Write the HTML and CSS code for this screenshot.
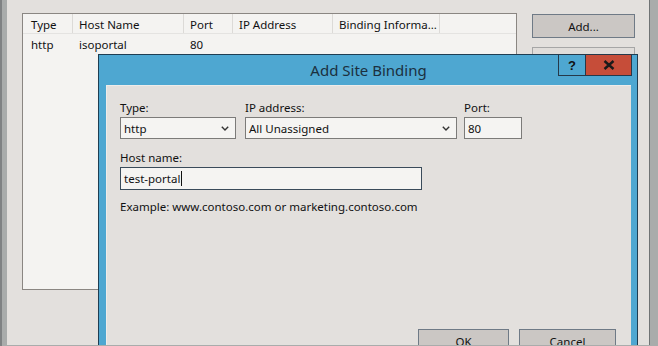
FILE: index.html
```html
<!DOCTYPE html>
<html>
<head>
<meta charset="utf-8">
<link rel="stylesheet" href="styles.css">
</head>
<body>
<div class="screen">
  <div class="window">
    <div class="listbox">
      <div class="row head">
        <div class="c c1">Type</div>
        <div class="c c2">Host Name</div>
        <div class="c c3">Port</div>
        <div class="c c4">IP Address</div>
        <div class="c c5">Binding Informa...</div>
        <div class="c c6"></div>
      </div>
      <div class="row item">
        <div class="c c1">http</div>
        <div class="c c2">isoportal</div>
        <div class="c c3">80</div>
        <div class="c c4"></div>
        <div class="c c5"></div>
      </div>
    </div>
    <div class="side">
      <div class="btn side-btn">Add...</div>
      <div class="btn side-btn light"></div>
    </div>

    <div class="dialog">
      <div class="titlebar">Add Site Binding</div>
      <div class="caption-btns">
        <div class="cap help">?</div>
        <div class="cap close">
          <svg width="12" height="10" viewBox="0 0 12 10"><path d="M1.5 1 L10.5 9 M10.5 1 L1.5 9" stroke="#1a1a1a" stroke-width="2.4" fill="none"/></svg>
        </div>
      </div>
      <div class="client">
        <div class="fields">
          <div class="field">
            <label class="lbl">Type:</label>
            <div class="select w-type"><span>http</span>
              <svg width="8" height="5" viewBox="0 0 8 5"><path d="M0.8 0.8 L4 4 L7.2 0.8" stroke="#333" stroke-width="1.4" fill="none"/></svg>
            </div>
          </div>
          <div class="field">
            <label class="lbl">IP address:</label>
            <div class="select w-ip"><span>All Unassigned</span>
              <svg width="8" height="5" viewBox="0 0 8 5"><path d="M0.8 0.8 L4 4 L7.2 0.8" stroke="#333" stroke-width="1.4" fill="none"/></svg>
            </div>
          </div>
          <div class="field">
            <label class="lbl">Port:</label>
            <div class="input w-port">80</div>
          </div>
        </div>
        <label class="lbl host-lbl">Host name:</label>
        <div class="input focused w-host">test-portal<span class="caret"></span></div>
        <div class="example">Example: www.contoso.com or marketing.contoso.com</div>
        <div class="spacer"></div>
        <div class="actions">
          <div class="btn ok">OK</div>
          <div class="btn cancel">Cancel</div>
        </div>
      </div>
    </div>
  </div>
</div>
</body>
</html>
```
FILE: styles.css
```css
* { box-sizing: border-box; }
html, body { margin: 0; padding: 0; }
body {
  width: 658px;
  height: 346px;
  overflow: hidden;
  font-family: "Noto Sans", "Open Sans", sans-serif;
  font-size: 11.5px;
  color: #111;
  background: #a9acab;
}
.screen {
  width: 658px;
  height: 346px;
  border-left: 2px solid #7f8283;
  padding: 0 8px 1px 5px;
}
.window {
  position: relative;
  overflow: hidden;
  height: 345px;
  background: #e3e0dd;
  border-right: 1px solid #6f7374;
  display: flex;
  align-items: flex-start;
  padding: 13px 0 0 15px;
  gap: 15px;
}
.listbox {
  width: 495px;
  height: 277px;
  background: #f4f3f1;
  border: 1px solid #8a8682;
}
.row { display: flex; height: 20px; }
.row.head { border-bottom: 1px solid #e4e3e1; }
.row.item { height: 20px; }
.c {
  padding-left: 8px;
  line-height: 21px;
  white-space: nowrap;
}
.head .c { border-right: 1px solid #dcdad7; }
.head .c6 { border-right: none; }
.c1 { width: 50px; }
.c2 { width: 111px; padding-left: 6px; }
.c3 { width: 49px; padding-left: 6px; }
.c4 { width: 100px; padding-left: 6px; }
.c5 { width: 107px; padding-left: 6px; }
.c6 { flex: 1; }

.side { display: flex; flex-direction: column; gap: 9px; padding-top: 1px; }
.btn {
  display: flex;
  align-items: center;
  justify-content: center;
  height: 24px;
  background: #cbc7c4;
  border: 1px solid #6f7a86;
}
.side-btn { width: 103px; }
.side-btn.light { background: #e0ddda; border-color: #a6a6a6; }

.dialog {
  position: absolute;
  left: 91px;
  top: 54px;
  width: 540px;
  height: 310px;
  background: #4ea7d1;
  border: 1px solid #1e3d52;
  padding: 0 6px 0 7px;
  display: flex;
  flex-direction: column;
}
.titlebar {
  height: 30px;
  flex: none;
  display: flex;
  align-items: center;
  justify-content: center;
  font-size: 15px;
  color: #1b3040;
  padding-bottom: 1px;
}
.caption-btns {
  position: absolute;
  top: -1px;
  right: 5px;
  display: flex;
}
.cap {
  height: 22px;
  border: 1px solid #25394a;
  display: flex;
  align-items: center;
  justify-content: center;
}
.help {
  width: 28px;
  background: #4ea7d1;
  font-weight: bold;
  font-size: 13px;
  color: #111;
  font-family: "Liberation Sans", sans-serif;
}
.close { width: 46px; background: #c64d39; border-left: none; }

.client {
  flex: 1;
  background: #e3e0dd;
  border-top: 1px solid #eeecea;
  border-left: 1px solid #eeecea;
  padding: 11px 0 0 13px;
  display: flex;
  flex-direction: column;
  align-items: flex-start;
}
.fields { display: flex; gap: 9px; }
.field { display: flex; flex-direction: column; }
.field:last-child { margin-left: -2px; }
.lbl { line-height: 21px; height: 20px; }
.select, .input {
  height: 22px;
  background: #f5f4f2;
  border: 1px solid #7c7b79;
  display: flex;
  align-items: center;
  padding: 0 3px 0 3px;
  white-space: nowrap;
}
.select { justify-content: space-between; padding-right: 6px; }
.w-type { width: 116px; }
.w-ip { width: 212px; }
.w-port { width: 58px; }
.host-lbl { margin-top: 8px; }
.w-host { width: 302px; height: 23px; }
.focused { border-color: #3a4b5a; }
.caret { display: inline-block; width: 1px; height: 15px; background: #111; margin-left: 1px; }
.example { margin-top: 6px; line-height: 21px; }
.spacer { flex: 1; }
.actions {
  display: flex;
  gap: 10px;
  align-self: flex-end;
  margin-right: 15px;
  margin-bottom: 10px;
  align-items: flex-start;
}
.ok { width: 91px; }
.cancel { width: 97px; }
```
